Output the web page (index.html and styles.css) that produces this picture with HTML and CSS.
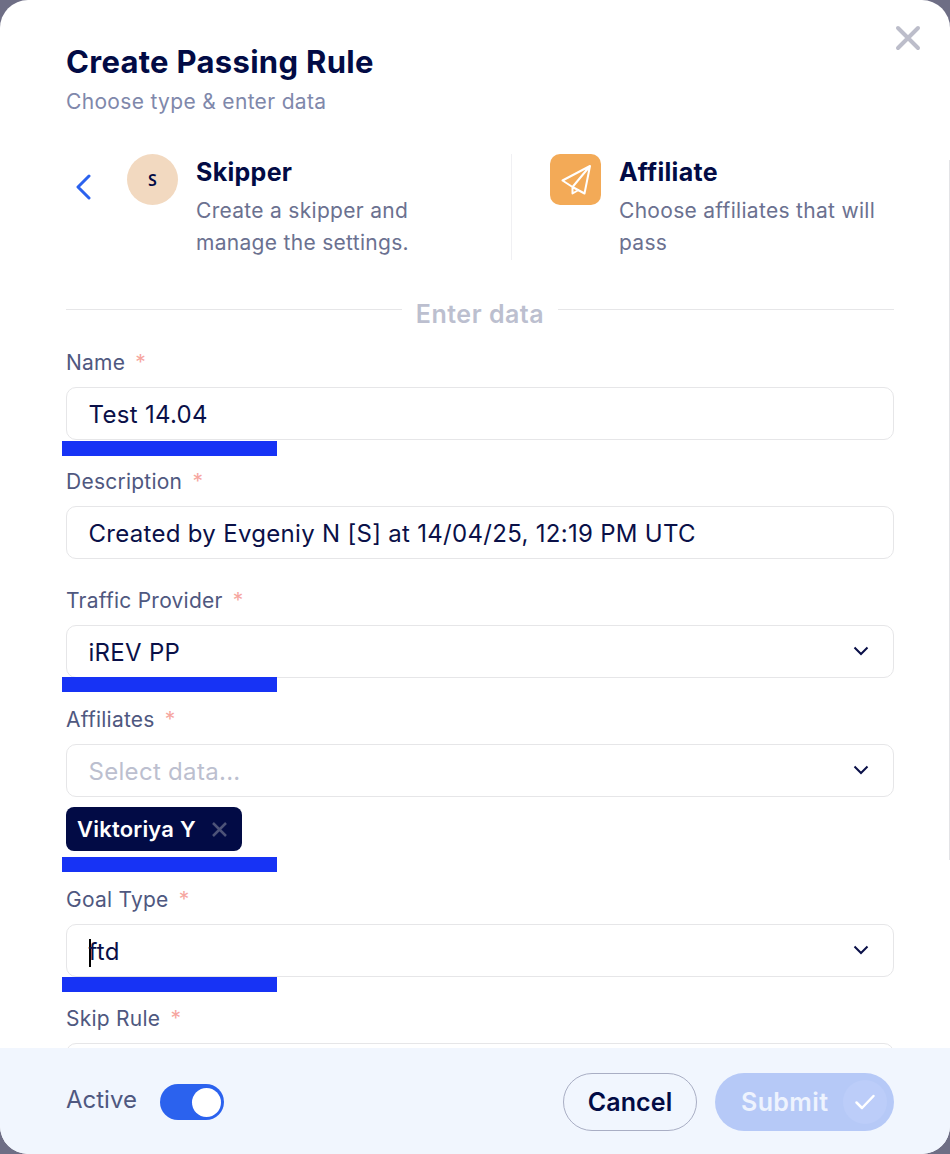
FILE: index.html
```html
<!DOCTYPE html>
<html lang="en">
<head>
    <meta charset="UTF-8">
    <meta name="viewport" content="width=device-width, initial-scale=1.0">
    <title>Create Passing Rule</title>
    <link rel="stylesheet" href="styles.css">
</head>
<body>
    <div class="modal">
        <button type="button" class="close-btn" aria-label="Close">
            <svg width="26" height="26" viewBox="0 0 26 26"><path d="M3 3 L23 23 M23 3 L3 23" fill="none" stroke="#bcbdca" stroke-width="4" stroke-linecap="round"/></svg>
        </button>
        <div class="scroll-thumb"></div>
        <div class="modal-body">
            <h1 class="title">Create Passing Rule</h1>
            <p class="subtitle">Choose type &amp; enter data</p>

            <div class="type-row">
                <button type="button" class="back-btn" aria-label="Back">
                    <svg width="16" height="26" viewBox="0 0 16 26"><path d="M14 2 L3 13 L14 24" fill="none" stroke="#2b62ee" stroke-width="3" stroke-linecap="round" stroke-linejoin="round"/></svg>
                </button>
                <div class="type-card type-skipper">
                    <div class="type-icon round">S</div>
                    <div class="type-text">
                        <h3>Skipper</h3>
                        <p>Create a skipper and<br>manage the settings.</p>
                    </div>
                </div>
                <div class="type-card type-affiliate">
                    <div class="type-icon square">
                        <svg width="32" height="32" viewBox="0 0 32 32"><path d="M30 2 L2.500 16.500 L12.500 23 L24.500 29.500 Z M30 2 L12.500 23 L12.500 29.500 L18.500 26" fill="none" stroke="#fff" stroke-width="2" stroke-linejoin="round" stroke-linecap="round"/></svg>
                    </div>
                    <div class="type-text">
                        <h3>Affiliate</h3>
                        <p>Choose affiliates that will pass</p>
                    </div>
                </div>
            </div>

            <div class="divider"><span>Enter data</span></div>

            <div class="form-group">
                <label>Name <i>*</i></label>
                <div class="input">Test 14.04</div>
                <div class="redact low"></div>
            </div>
            <div class="form-group">
                <label>Description <i>*</i></label>
                <div class="input">Created by Evgeniy N [S] at 14/04/25, 12:19 PM UTC</div>
            </div>
            <div class="form-group">
                <label>Traffic Provider <i>*</i></label>
                <div class="input select">iREV PP
                    <svg class="chevron" width="16" height="10" viewBox="0 0 16 10"><path d="M1.500 1.500 L8 8 L14.500 1.500" fill="none" stroke="#0a1048" stroke-width="2"/></svg>
                </div>
                <div class="redact high"></div>
            </div>
            <div class="form-group has-tags">
                <label>Affiliates <i>*</i></label>
                <div class="input select placeholder">Select data...
                    <svg class="chevron" width="16" height="10" viewBox="0 0 16 10"><path d="M1.500 1.500 L8 8 L14.500 1.500" fill="none" stroke="#0a1048" stroke-width="2"/></svg>
                </div>
                <div class="tag">Viktoriya Y
                    <svg width="15" height="15" viewBox="0 0 15 15"><path d="M1 1 L14 14 M14 1 L1 14" fill="none" stroke="#4d5378" stroke-width="2.500"/></svg>
                </div>
                <div class="redact high"></div>
            </div>
            <div class="form-group">
                <label>Goal Type <i>*</i></label>
                <div class="input select"><span class="caret"></span>ftd
                    <svg class="chevron" width="16" height="10" viewBox="0 0 16 10"><path d="M1.500 1.500 L8 8 L14.500 1.500" fill="none" stroke="#0a1048" stroke-width="2"/></svg>
                </div>
                <div class="redact"></div>
            </div>
            <div class="form-group">
                <label>Skip Rule <i>*</i></label>
                <div class="input select"></div>
            </div>
        </div>
        <div class="modal-footer">
            <div class="active-toggle">
                <span>Active</span>
                <div class="switch"><div class="knob"></div></div>
            </div>
            <div class="footer-buttons">
                <button type="button" class="btn-cancel">Cancel</button>
                <button type="button" class="btn-submit">Submit
                    <span class="check">
                        <svg width="22" height="18" viewBox="0 0 22 18"><path d="M2.500 9.500 L8 15 L19.500 3" fill="none" stroke="#fff" stroke-width="2.500" stroke-linecap="round" stroke-linejoin="round"/></svg>
                    </span>
                </button>
            </div>
        </div>
    </div>
</body>
</html>
```

FILE: styles.css
```css
* {
    box-sizing: border-box;
}
html,
body {
    margin: 0;
    padding: 0;
    height: 100%;
    overflow: hidden;
}
body {
    font-family: Inter, "Liberation Sans", sans-serif;
    background-color: #6e6e85;
    color: #020b45;
}
.modal {
    position: relative;
    width: 950px;
    height: 1154px;
    background-color: #fff;
    border-radius: 28px;
    overflow: hidden;
    display: flex;
    flex-direction: column;
}
.close-btn {
    position: absolute;
    top: 25px;
    right: 29px;
    padding: 0;
    border: none;
    background: none;
    line-height: 0;
}
.scroll-thumb {
    position: absolute;
    top: 160px;
    right: 0;
    width: 1px;
    height: 700px;
    background-color: #e3e3e6;
}
.modal-body {
    flex: 1;
    min-height: 0;
    overflow: hidden;
    padding: 42px 56px 0 66px;
}
.title {
    margin: 0;
    font-size: 31px;
    line-height: 40px;
    font-weight: 700;
    letter-spacing: 0.3px;
    color: #020b45;
}
.subtitle {
    margin: 0;
    font-size: 21px;
    line-height: 40px;
    letter-spacing: 0.33px;
    color: #7f88ab;
}
.type-row {
    display: flex;
    margin-top: 32px;
    height: 106px;
}
.back-btn {
    width: 61px;
    padding: 20px 0 0 9px;
    border: none;
    background: none;
    text-align: left;
    align-self: flex-start;
}
.type-card {
    display: flex;
    gap: 18px;
}
.type-skipper {
    width: 385px;
    border-right: 1px solid #f0f0f3;
}
.type-affiliate {
    padding-left: 38px;
    flex: 1;
}
.type-icon {
    flex: none;
    width: 51px;
    height: 51px;
    display: flex;
    align-items: center;
    justify-content: center;
}
.type-icon.round {
    border-radius: 50%;
    background-color: #f2d9c0;
    color: #020b45;
    font-size: 16px;
    font-weight: 600;
    font-family: "Noto Sans", sans-serif;
}
.type-icon.square {
    border-radius: 10px;
    background-color: #f3aa57;
}
.type-text h3 {
    margin: 0;
    font-size: 25px;
    line-height: 36px;
    font-weight: 700;
    letter-spacing: 0.3px;
    color: #020b45;
}
.type-text p {
    margin: 5px 0 0;
    font-size: 21px;
    line-height: 32px;
    letter-spacing: 0.3px;
    color: #6b7190;
}
.divider {
    display: flex;
    align-items: flex-start;
    gap: 14px;
    margin-top: 36px;
    color: #bcbfcf;
    font-size: 25px;
    font-weight: 600;
    line-height: 36px;
    letter-spacing: 0.5px;
}
.divider::before,
.divider::after {
    content: "";
    flex: 1;
    height: 1px;
    margin-top: 13px;
    background-color: #e6e6e8;
}
.form-group {
    position: relative;
    margin-top: 15px;
    height: 104px;
}
.divider + .form-group {
    margin-top: 19px;
}
.form-group.has-tags {
    height: 165px;
}
.form-group label {
    display: block;
    height: 24px;
    font-size: 21px;
    line-height: 24px;
    letter-spacing: 0.24px;
    color: #4f5880;
    margin-bottom: 12px;
}
.form-group label i {
    font-style: normal;
    color: #f6a6a0;
    margin-left: 4px;
}
.input {
    position: relative;
    height: 53px;
    padding: 0 22px 0 21.500px;
    border: 1px solid #e6e6e8;
    border-radius: 10px;
    background-color: #fff;
    font-size: 24px;
    line-height: 53px;
    letter-spacing: 0.3px;
    color: #0a1048;
}
.input.placeholder {
    color: #bcbfcf;
}
.chevron {
    position: absolute;
    right: 24px;
    top: 20px;
}
.caret {
    display: inline-block;
    width: 2px;
    height: 28px;
    background-color: #000;
    vertical-align: middle;
    margin-right: -2px;
}
.redact {
    position: absolute;
    left: -4px;
    bottom: 0;
    width: 215px;
    height: 15px;
    background-color: #1733f5;
}
.redact.low {
    bottom: -1px;
}
.redact.high {
    bottom: 1px;
}
.tag {
    display: inline-flex;
    align-items: center;
    gap: 16px;
    height: 44px;
    margin-top: 10px;
    padding: 0 15px 0 11px;
    border-radius: 8px;
    background-color: #020b45;
    color: #fff;
    font-size: 22px;
    font-weight: 600;
    letter-spacing: 0.2px;
}
.modal-footer {
    flex: none;
    height: 106px;
    padding: 2px 56px 0 66px;
    display: flex;
    align-items: center;
    justify-content: space-between;
    background-color: #f1f6fe;
}
.active-toggle {
    display: flex;
    align-items: center;
    gap: 23px;
    font-size: 24px;
    color: #4f5880;
}
.active-toggle span {
    margin-top: -6px;
}
.switch {
    display: flex;
    justify-content: flex-end;
    align-items: center;
    width: 64px;
    height: 36px;
    padding: 0 3px;
    border-radius: 18px;
    background-color: #2b62ee;
}
.knob {
    width: 29px;
    height: 29px;
    border-radius: 50%;
    background-color: #fff;
}
.footer-buttons {
    display: flex;
    gap: 18px;
}
.btn-cancel,
.btn-submit {
    height: 58px;
    border-radius: 29px;
    font-family: inherit;
    font-size: 25px;
    font-weight: 600;
}
.btn-cancel {
    width: 134px;
    padding: 0;
    background: none;
    border: 1px solid #a9aec4;
    letter-spacing: 0.1px;
    color: #020b45;
}
.btn-submit {
    display: flex;
    align-items: center;
    justify-content: space-between;
    width: 179px;
    padding: 0 7px 0 26px;
    border: none;
    background-color: #b6c9f7;
    letter-spacing: 0.4px;
    color: #eef3fe;
}
.check {
    display: flex;
    align-items: center;
    justify-content: center;
    width: 44px;
    height: 44px;
    border-radius: 50%;
    background-color: #bccdf9;
}
```
